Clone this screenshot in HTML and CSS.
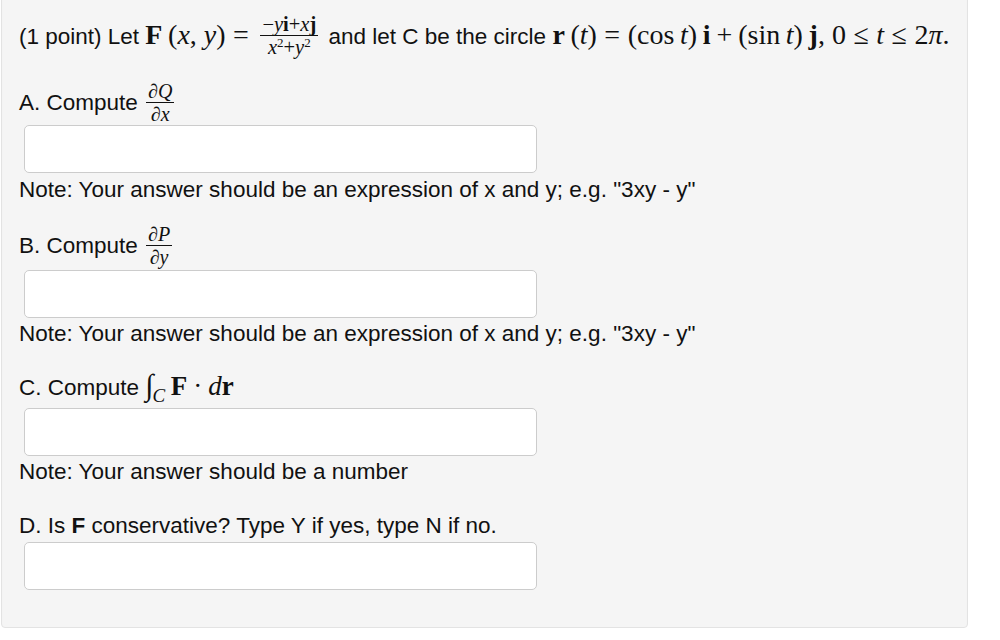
FILE: index.html
```html
<!DOCTYPE html>
<html>
<head>
<meta charset="utf-8">
<link rel="stylesheet" href="styles.css">
</head>
<body>
<div class="panel">
  <p class="line title">(1 point) Let <span class="m"><b>F</b>&#8201;(<i>x</i>, <i>y</i>)<span class="rel">=</span><span class="frac"><span class="num">−<i>y</i><b>i</b>+<i>x</i><b>j</b></span><span class="den"><i>x</i><sup>2</sup>+<i>y</i><sup>2</sup></span></span></span> and let C be the circle <span class="m"><b>r</b>&#8201;(<i>t</i>)<span class="rel">=</span>(cos&#8201;<i>t</i>)&#8201;<b>i</b><span class="bin">+</span>(sin&#8201;<i>t</i>)&#8201;<b>j</b>, 0<span class="rel">≤</span><i>t</i><span class="rel">≤</span>2<i>π</i>.</span></p>

  <p class="line label la">A. Compute <span class="m"><span class="frac small"><span class="num">∂<i>Q</i></span><span class="den">∂<i>x</i></span></span></span></p>
  <div class="answer a1"></div>
  <p class="line note n1">Note: Your answer should be an expression of x and y; e.g. "3xy - y"</p>

  <p class="line label lb">B. Compute <span class="m"><span class="frac small"><span class="num">∂<i>P</i></span><span class="den">∂<i>y</i></span></span></span></p>
  <div class="answer a2"></div>
  <p class="line note n2">Note: Your answer should be an expression of x and y; e.g. "3xy - y"</p>

  <p class="line label lc">C. Compute <span class="m"><span class="int">∫</span><sub class="sub"><i>C</i></sub>&#8201;<b>F</b><span class="bin">·</span><i>d</i><b>r</b></span></p>
  <div class="answer a3"></div>
  <p class="line note n3">Note: Your answer should be a number</p>

  <p class="line label ld">D. Is <b>F</b> conservative? Type Y if yes, type N if no.</p>
  <div class="answer a4"></div>
</div>
</body>
</html>
```
FILE: styles.css
```css
html, body {
  margin: 0;
  padding: 0;
  background: #ffffff;
}
body {
  font-family: "Liberation Sans", Arial, sans-serif;
  font-size: 22.5px;
  color: #111;
}
.panel {
  box-sizing: border-box;
  margin: -12px 0 0 1px;
  width: 967px;
  height: 640px;
  padding: 0 0 0 17px;
  background: #f5f5f5;
  border: 1px solid #e3e3e3;
  border-radius: 4px;
  box-shadow: inset 0 1px 1px rgba(0,0,0,0.05);
  overflow: hidden;
}
.line {
  margin: 0;
  line-height: 26px;
  white-space: nowrap;
}
.title { margin-top: 35px; }
.title .m { font-size: 28px; }
.m {
  font-family: "Liberation Serif", "Times New Roman", serif;
  font-size: 27px;
  line-height: 0;
}
.m i { font-style: italic; }
.m b { font-weight: bold; }
.rel { margin: 0 7.5px; }
.bin { margin: 0 6px; }
.frac {
  display: inline-flex;
  flex-direction: column;
  align-items: center;
  font-size: 20.5px;
  line-height: 17px;
  vertical-align: 13px;
  margin: -30px 4px;
}
.frac .num {
  padding: 0 2px 2px;
  border-bottom: 1px solid #111;
}
.frac .den {
  padding: 3px 2px 0;
}
.frac sup {
  font-size: 13px;
  line-height: 0;
  vertical-align: 7px;
}
.frac.small {
  font-size: 20px;
  vertical-align: 12px;
  margin: -30px 2px;
}
.int {
  font-size: 30px;
  font-style: italic;
  line-height: 0;
}
.sub {
  font-size: 19px;
  vertical-align: -7px;
  line-height: 0;
  margin-left: -1px;
}
.answer {
  box-sizing: border-box;
  margin: 9px 0 0 5px;
  width: 513px;
  height: 48px;
  background: #ffffff;
  border: 1.5px solid #cccccc;
  border-radius: 5px;
}
.la { margin-top: 40px; }
.a1 { margin-top: 9px; }
.n1 { margin-top: 4px; }
.lb { margin-top: 30px; }
.a2 { margin-top: 11px; }
.n2 { margin-top: 3px; }
.lc { margin-top: 28px; }
.a3 { margin-top: 7px; }
.n3 { margin-top: 3px; }
.ld { margin-top: 28px; }
.a4 { margin-top: 3px; }
```
